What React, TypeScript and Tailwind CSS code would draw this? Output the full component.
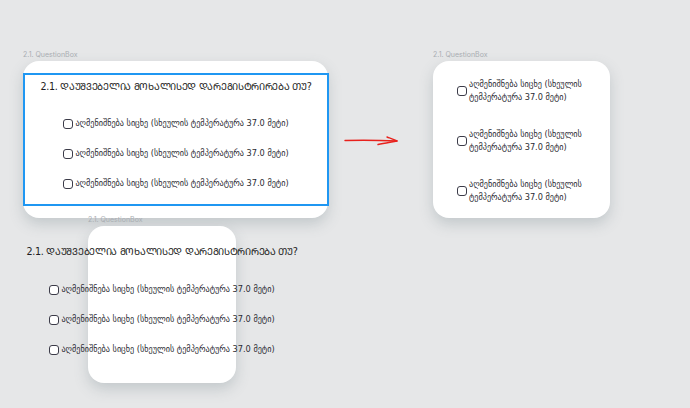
import React from "react";

const LABEL = "აღმენიშნება სიცხე (სხეულის ტემპერატურა 37.0 მეტი)";
const TITLE = "2.1. ᲓᲐᲣᲨᲕᲔᲑᲔᲚᲘᲐ ᲛᲝᲮᲐᲚᲘᲡᲔᲓ ᲓᲐᲠᲔᲒᲘᲡᲢᲠᲘᲠᲔᲑᲐ ᲗᲣ?";

const geo = { fontFamily: '"DejaVu Sans", "Noto Sans", sans-serif' };

function Box() {
  return <span className="block w-[10px] h-[10px] shrink-0 rounded-[3px] border-[1.5px] border-[#3b3b48] bg-white" />;
}

function Row({ wrap = false }: { wrap?: boolean }) {
  return (
    <div className="flex items-center gap-[2px]">
      <Box />
      <span
        className={wrap ? "text-[8.2px] leading-[13px] text-[#2b2b33] w-[118px]" : "text-[8.2px] leading-[13px] text-[#2b2b33] whitespace-nowrap"}
        style={geo}
      >
        {LABEL}
      </span>
    </div>
  );
}

function FrameLabel({ children }: { children: React.ReactNode }) {
  return (
    <div className="absolute -top-[10px] left-0 text-[7px] leading-[8px] text-[#a9adb2] whitespace-nowrap" style={{ fontFamily: "Inter, sans-serif" }}>
      {children}
    </div>
  );
}

function Title() {
  return (
    <div className="text-[9.6px] leading-[14px] tracking-[-0.3px] text-[#1c1c22] whitespace-nowrap" style={geo}>
      {TITLE}
    </div>
  );
}

export default function App() {
  return (
    <div className="relative w-[690px] h-[408px] overflow-hidden bg-[#e6e7e8]">
      {/* Frame 1 */}
      <div className="absolute left-[23px] top-[61px] w-[305px] h-[157px] rounded-[16px] bg-white shadow-[0_6px_14px_rgba(90,110,120,0.25)]">
        <FrameLabel>2.1. QuestionBox</FrameLabel>
        <div className="absolute left-0 right-[-1px] top-[12px] h-[133px] border-2 border-[#1f97f2] flex flex-col items-center pt-[5px]">
          <Title />
          <div className="flex flex-col gap-[17px] mt-[23px]">
            <Row />
            <Row />
            <Row />
          </div>
        </div>
      </div>

      {/* Frame 2 */}
      <div className="absolute left-[433px] top-[61px] w-[177px] h-[157px] rounded-[16px] bg-white shadow-[0_6px_14px_rgba(90,110,120,0.25)] flex flex-col pl-[24px] pt-[17px] gap-[24px]">
        <FrameLabel>2.1. QuestionBox</FrameLabel>
        <Row wrap />
        <Row wrap />
        <Row wrap />
      </div>

      {/* Frame 3 */}
      <div className="absolute left-[88px] top-[226px] w-[148px] h-[157px] rounded-[16px] bg-white shadow-[0_6px_14px_rgba(90,110,120,0.25)] flex flex-col items-center pt-[19px]">
        <FrameLabel>2.1. QuestionBox</FrameLabel>
        <Title />
        <div className="flex flex-col gap-[17px] mt-[24px]">
          <Row />
          <Row />
          <Row />
        </div>
      </div>

      {/* Arrow */}
      <svg className="absolute left-[343px] top-[133px]" width="58" height="16" viewBox="0 0 58 16" fill="none">
        <path d="M2 7.5 C 20 7, 38 7.3, 54 8" stroke="#e8211c" strokeWidth="1.4" strokeLinecap="round" />
        <path d="M44 4 C 48 5.5, 51 6.5, 54 8 C 49 9, 42 10, 35 11.5" stroke="#e8211c" strokeWidth="1.4" strokeLinecap="round" strokeLinejoin="round" />
      </svg>
    </div>
  );
}
